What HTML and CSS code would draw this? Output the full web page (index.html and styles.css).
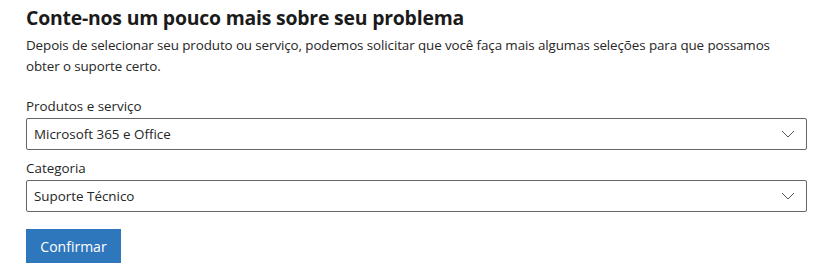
FILE: index.html
```html
<!DOCTYPE html>
<html lang="pt-BR">
<head>
    <meta charset="UTF-8">
    <meta name="viewport" content="width=device-width, initial-scale=1.0">
    <title>Suporte</title>
    <link rel="stylesheet" href="styles.css">
</head>
<body>

    <div class="content">
        <h2>Conte-nos um pouco mais sobre seu problema</h2>
        <p class="intro">Depois de selecionar seu produto ou serviço, podemos solicitar que você faça mais algumas seleções para que possamos obter o suporte certo.</p>

        <div class="field">
            <label for="product">Produtos e serviço</label>
            <div class="select-box" id="product">
                <span>Microsoft 365 e Office</span>
                <svg width="14" height="8" viewBox="0 0 14 8"><path d="M1 1 L7 7 L13 1" fill="none" stroke="#555" stroke-width="1"/></svg>
            </div>
        </div>

        <div class="field">
            <label for="category">Categoria</label>
            <div class="select-box" id="category">
                <span>Suporte Técnico</span>
                <svg width="14" height="8" viewBox="0 0 14 8"><path d="M1 1 L7 7 L13 1" fill="none" stroke="#555" stroke-width="1"/></svg>
            </div>
        </div>

        <button class="confirm-button">Confirmar</button>
    </div>

</body>
</html>
```

FILE: styles.css
```css
body {
    font-family: "Open Sans", "Noto Sans", sans-serif;
    background-color: #fff;
    color: #262626;
    margin: 0;
    padding: 0;
}

.content {
    padding: 4px 28px 0 26px;
}

h2 {
    font-size: 19.4px;
    font-weight: 700;
    color: #1b1b1b;
    margin: 0;
    line-height: 28px;
    letter-spacing: -0.2px;
}

.intro {
    font-size: 13.4px;
    line-height: 21px;
    margin: 3px 0 0;
    max-width: 770px;
    letter-spacing: -0.1px;
}

.field {
    margin-top: 8px;
}

    .field:first-of-type {
        margin-top: 19px;
    }

    .field label {
        display: block;
        font-size: 13.4px;
        line-height: 20px;
        margin-bottom: 2px;
    }

.select-box {
    display: flex;
    justify-content: space-between;
    align-items: center;
    height: 30px;
    border: 1px solid #666;
    border-radius: 2px;
    padding: 0 10px 0 7px;
    font-size: 13.4px;
}

    .select-box svg {
        margin-right: 1px;
    }

.confirm-button {
    margin-top: 17px;
    width: 95px;
    height: 34px;
    background-color: #2f77bc;
    color: #fff;
    border: none;
    border-radius: 0;
    font-family: "Open Sans", "Noto Sans", sans-serif;
    font-size: 14px;
    cursor: pointer;
}
```
